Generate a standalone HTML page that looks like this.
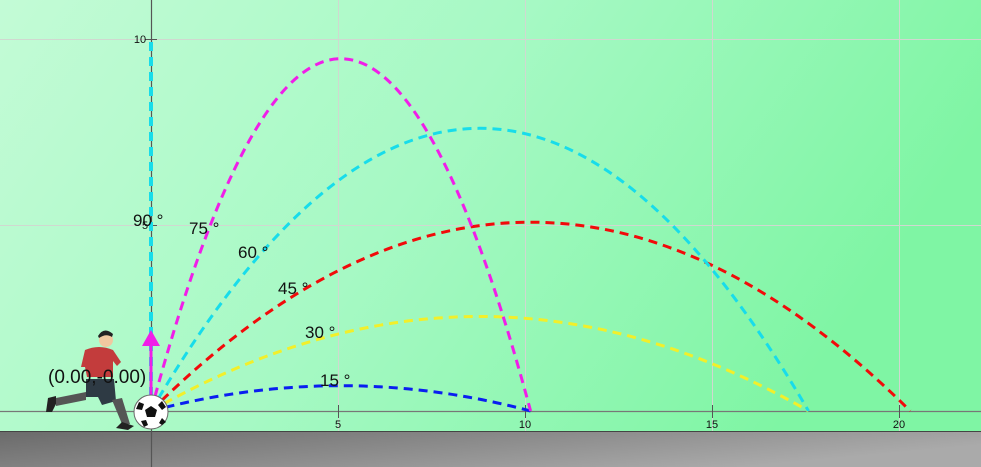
<!DOCTYPE html>
<html><head><meta charset="utf-8"><style>
html,body{margin:0;padding:0;width:981px;height:467px;overflow:hidden}
body{font-family:"Liberation Sans",sans-serif}
</style></head><body>
<svg width="981" height="467" viewBox="0 0 981 467" xmlns="http://www.w3.org/2000/svg">
<defs>
<linearGradient id="bg" x1="0" y1="0" x2="1" y2="0.3">
<stop offset="0" stop-color="#c3fbd6"/><stop offset="0.5" stop-color="#a6f9c4"/><stop offset="1" stop-color="#7ff5a4"/>
</linearGradient>
<linearGradient id="gr" x1="0" y1="0" x2="1" y2="0.4">
<stop offset="0" stop-color="#6a6a6a"/><stop offset="1" stop-color="#aaaaaa"/>
</linearGradient>
</defs>
<rect width="981" height="431" fill="url(#bg)"/>
<rect y="431" width="981" height="36" fill="url(#gr)"/>
<line x1="0" y1="431.5" x2="981" y2="431.5" stroke="#444" stroke-width="1"/>
<g stroke="#d0d8d0" stroke-width="1">
<line x1="338.5" y1="0" x2="338.5" y2="431"/><line x1="525.5" y1="0" x2="525.5" y2="431"/>
<line x1="712.5" y1="0" x2="712.5" y2="431"/><line x1="899.5" y1="0" x2="899.5" y2="431"/>
<line x1="0" y1="225.5" x2="981" y2="225.5"/><line x1="0" y1="39.5" x2="981" y2="39.5"/>
</g>
<line x1="0" y1="411.5" x2="981" y2="411.5" stroke="#777" stroke-width="1.2"/>
<line x1="151.5" y1="0" x2="151.5" y2="467" stroke="#555" stroke-width="1.2"/>
<g stroke="#555"><line x1="338.5" y1="405" x2="338.5" y2="418"/><line x1="525.5" y1="405" x2="525.5" y2="418"/><line x1="712.5" y1="405" x2="712.5" y2="418"/><line x1="899.5" y1="405" x2="899.5" y2="418"/><line x1="145" y1="39.5" x2="157" y2="39.5"/><line x1="145" y1="225.5" x2="157" y2="225.5"/></g>
<g font-size="11" fill="#111" text-anchor="middle">
<text x="338" y="428">5</text><text x="525" y="428">10</text><text x="712" y="428">15</text><text x="899" y="428">20</text><text x="151" y="428">0</text>
<text x="140" y="43">10</text><text x="145" y="229">5</text>
</g>
<g fill="none" stroke-width="3" stroke-dasharray="9 6">
<path d="M151 411 Q340.8 360.4 530.6 411" stroke="#0a1ef0"/>
<path d="M151 411 Q479.8 222 808.5 411" stroke="#f2ef2a"/>
<path d="M151 411 Q530.6 33.4 910.2 411" stroke="#f20a0a"/>
<path d="M151 411 Q479.8 -154.4 808.5 411" stroke="#18dcea"/>
<path d="M151 411 Q340.8 -293.6 530.6 411" stroke="#f01ee8"/>
<path d="M151 411 L151 38" stroke="#18dcea" stroke-width="4"/>
</g>
<line x1="151" y1="405" x2="151" y2="345" stroke="#f01ee8" stroke-width="3"/>
<polygon points="151,330 142,346 160,346" fill="#f01ee8"/>
<!-- player -->
<g>
<circle cx="106" cy="340" r="7" fill="#f1c8a0"/>
<path d="M98 336 q6-10 15-2 l-1 3 q-6-4-13 1z" fill="#222"/>
<path d="M85 350 q14-6 28 0 l8 12 -4 4 -4-5 0 16 -26 0 -2-10 -4 0z" fill="#c33c3c"/>
<path d="M86 379 l28 0 2 22 -14 4 -4-8 -12 0z" fill="#2e3a44"/>
<path d="M86 392 l-30 6 0 8 30-6z" fill="#555"/>
<path d="M56 396 l-8 2 -2 14 6 0 4-8z" fill="#222"/>
<path d="M112 400 l10 24 8 0 -8-26z" fill="#555"/>
<path d="M122 422 l-6 6 12 2 6-4z" fill="#222"/>
</g>
<circle cx="151" cy="412" r="17" fill="#fff" stroke="#666" stroke-width="1"/>
<polygon points="151,406 157,410 155,417 147,417 145,410" fill="#111"/>
<path d="M139 402 l5 2 -2 6 -6 -1z M162 401 l4 6 -4 3 -4-5z M141 421 l5-1 2 5 -4 2z M159 423 l3-5 4 4 -4 3z" fill="#111"/>
<g font-size="17" fill="#111">
<text x="133" y="226">90 °</text><text x="189" y="234">75 °</text><text x="238" y="258">60 °</text>
<text x="278" y="294">45 °</text><text x="305" y="338">30 °</text><text x="320" y="386">15 °</text>
<text x="48" y="383" font-size="19">(0.00,-0.00)</text>
</g>
</svg>
</body></html>
